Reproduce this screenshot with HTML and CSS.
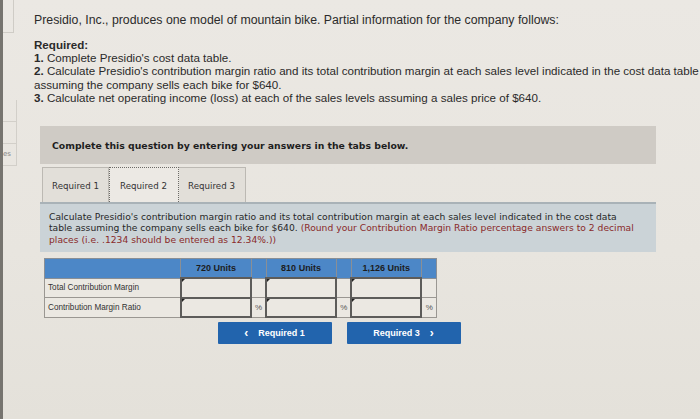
FILE: index.html
```html
<!DOCTYPE html>
<html lang="en">
<head>
<meta charset="utf-8">
<title>Presidio, Inc.</title>
<link rel="stylesheet" href="styles.css">
</head>
<body>
<div class="page">
  <aside class="side">
    <div class="side-top"></div>
    <div class="side-list">
      <div class="side-item"></div>
      <div class="side-item"></div>
      <div class="side-item">es</div>
    </div>
  </aside>
  <main class="main">
    <p class="intro">Presidio, Inc., produces one model of mountain bike. Partial information for the company follows:</p>
    <div class="req">
      <div class="req-title">Required:</div>
      <div><b>1.</b> Complete Presidio's cost data table.</div>
      <div><b>2.</b> Calculate Presidio's contribution margin ratio and its total contribution margin at each sales level indicated in the cost data table<br>assuming the company sells each bike for $640.</div>
      <div><b>3.</b> Calculate net operating income (loss) at each of the sales levels assuming a sales price of $640.</div>
    </div>
    <section class="panel">
      <div class="instruction">Complete this question by entering your answers in the tabs below.</div>
      <div class="tabs">
        <div class="tab">Required 1</div>
        <div class="tab active">Required 2</div>
        <div class="tab">Required 3</div>
      </div>
      <div class="info">
        <p class="info-text">Calculate Presidio's contribution margin ratio and its total contribution margin at each sales level indicated in the cost data table assuming the company sells each bike for $640. <span class="note">(Round your Contribution Margin Ratio percentage answers to 2 decimal places (i.e. .1234 should be entered as 12.34%.))</span></p>
      </div>
      <table class="grid">
        <colgroup>
          <col class="c-label"><col class="c-in"><col class="c-pct"><col class="c-in"><col class="c-pct"><col class="c-in"><col class="c-pct">
        </colgroup>
        <thead>
          <tr><th></th><th>720 Units</th><th></th><th>810 Units</th><th></th><th>1,126 Units</th><th></th></tr>
        </thead>
        <tbody>
          <tr><td class="label">Total Contribution Margin</td><td class="in"></td><td></td><td class="in"></td><td></td><td class="in"></td><td></td></tr>
          <tr><td class="label">Contribution Margin Ratio</td><td class="in"></td><td class="pct">%</td><td class="in"></td><td class="pct">%</td><td class="in"></td><td class="pct">%</td></tr>
        </tbody>
      </table>
      <div class="nav">
        <button class="btn"><span class="chev">&lsaquo;</span>Required 1</button>
        <button class="btn">Required 3<span class="chev right">&rsaquo;</span></button>
      </div>
    </section>
  </main>
</div>
</body>
</html>
```
FILE: styles.css
```css
html, body {
  margin: 0;
  padding: 0;
}
body {
  width: 700px;
  height: 419px;
  overflow: hidden;
  background: linear-gradient(180deg, #ebe8e3 0%, #e8e5df 60%, #e4e1da 100%);
  color: #2a2a2a;
  font-family: "Liberation Sans", Arial, sans-serif;
}
.page {
  display: flex;
  height: 419px;
}
.side {
  width: 14px;
  flex: none;
  border-left: 3px solid #76746f;
  display: flex;
  flex-direction: column;
}
.side-top {
  height: 32px;
  width: 10px;
  border: 1px solid #cfccc6;
  border-left: none;
  border-top: none;
}
.side-list {
  margin-top: 67px;
  display: flex;
  flex-direction: column;
}
.side-item {
  height: 21px;
  border: 1px solid #d2cfc9;
  border-left: none;
  border-top: none;
  font-family: "DejaVu Sans", sans-serif;
  font-size: 7px;
  color: #888;
  line-height: 21px;
}
.main {
  flex: 1;
  padding: 14px 0 0 17px;
  min-width: 0;
}
.intro {
  margin: 0;
  font-size: 12.3px;
  line-height: 13px;
  color: #2b2b2b;
  white-space: nowrap;
}
.req {
  margin-top: 11px;
  font-size: 11.6px;
  line-height: 13.2px;
  white-space: nowrap;
}
.req b, .req-title {
  font-weight: bold;
}
.panel {
  margin: 22px 0 0 6px;
  width: 616px;
}
.instruction {
  background: #cfcbc5;
  height: 38px;
  display: flex;
  align-items: center;
  padding-left: 12px;
  font-family: "DejaVu Sans", Verdana, sans-serif;
  font-weight: bold;
  font-size: 9.3px;
  color: #1e1e1e;
}
.tabs {
  display: flex;
  margin: 3px 0 0 2px;
  height: 35px;
}
.tab {
  width: 67px;
  box-sizing: border-box;
  border: 1px solid #bcb9b3;
  border-bottom: none;
  background: #e2dfd9;
  font-family: "DejaVu Sans", Verdana, sans-serif;
  font-size: 8.7px;
  color: #333;
  display: flex;
  align-items: center;
  padding-left: 9px;
  padding-top: 2px;
}
.tab + .tab {
  border-left: none;
}
.tab.active {
  width: 70px;
  background: #ecE9e4;
  border: 1px dotted #6c6a66;
  border-bottom: none;
  padding-left: 10px;
}
.tab.active + .tab {
  border-left: none;
}
.info {
  background: #cbd3d7;
  border-top: 2px solid #a9b2b7;
  height: 50px;
  box-sizing: border-box;
  padding: 7px 20px 0 9px;
}
.info-text {
  margin: 0;
  font-family: "DejaVu Sans", Verdana, sans-serif;
  font-size: 9.2px;
  line-height: 11.3px;
  color: #272727;
}
.note {
  color: #8a2a2a;
}
.grid {
  margin: 6px 0 0 4px;
  border-collapse: collapse;
  table-layout: fixed;
  width: 393px;
  font-size: 8.2px;
}
.c-label { width: 136px; }
.c-in { width: 70px; }
.c-pct { width: 15px; }
.grid th {
  height: 18px;
  background: #4c87c7;
  border: 1px solid #8a8f95;
  font-weight: bold;
  font-size: 9px;
  color: #1c1c1c;
  padding: 0;
  text-align: center;
}
.grid td {
  height: 17.5px;
  border: 1px solid #9a9792;
  background: #ebe8e2;
  padding: 0;
  color: #333;
}
.grid td.label {
  padding-left: 3px;
}
.grid td.in {
  border: 2px solid #5d5c5a;
  position: relative;
}
.grid td.in::before {
  content: "";
  position: absolute;
  left: 0;
  top: 0;
  border-top: 3px solid #222;
  border-right: 3px solid transparent;
}
.grid td.pct {
  text-align: center;
  font-size: 8px;
  color: #555;
}
.nav {
  display: flex;
  justify-content: center;
  gap: 15px;
  margin-top: 4px;
  padding-right: 18px;
}
.btn {
  width: 114px;
  height: 22px;
  border: none;
  border-radius: 1px;
  background: #2264ad;
  color: #fff;
  font-family: "Liberation Sans", Arial, sans-serif;
  font-weight: bold;
  font-size: 9px;
  display: flex;
  align-items: center;
  justify-content: center;
  padding: 0;
}
.chev {
  font-size: 12px;
  margin-right: 10px;
  line-height: 1;
}
.chev.right {
  margin-right: 0;
  margin-left: 10px;
}
```
